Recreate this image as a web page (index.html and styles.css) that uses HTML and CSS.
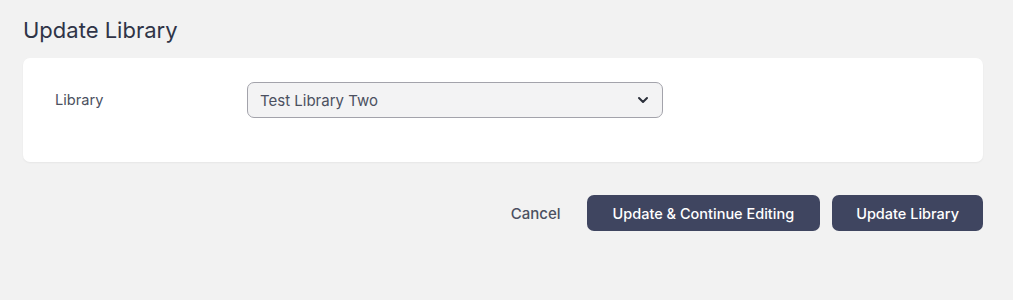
FILE: index.html
```html
<!DOCTYPE html>
<html>
<head>
<meta charset="utf-8">
<link rel="stylesheet" href="styles.css">
</head>
<body>
<div class="page">
  <h1 class="title">Update Library</h1>
  <div class="card">
    <div class="row">
      <label class="label">Library</label>
      <div class="select">
        <span class="select-text">Test Library Two</span>
        <svg class="chev" width="12" height="8" viewBox="0 0 12 8"><path d="M2 2 L6 6 L10 2" fill="none" stroke="#2b2f3a" stroke-width="2" stroke-linecap="round" stroke-linejoin="round"/></svg>
      </div>
    </div>
  </div>
  <div class="actions">
    <a class="cancel">Cancel</a>
    <button class="btn btn-wide">Update &amp; Continue Editing</button>
    <button class="btn">Update Library</button>
  </div>
</div>
</body>
</html>
```
FILE: styles.css
```css
* { box-sizing: border-box; }
html, body { margin: 0; padding: 0; background: #f2f2f2; }
body { font-family: Inter, Roboto, "Noto Sans", sans-serif; color: #2f3447; }
.page { padding: 16px 30px 0 23px; }
.title { margin: 0 0 14px; font-size: 22px; font-weight: 400; line-height: 28px; color: #2f3447; }
.card { background: #fff; border-radius: 7px; padding: 24px 32px 44px; box-shadow: 0 1px 2px rgba(0,0,0,0.05); }
.row { display: flex; align-items: center; }
.label { width: 192px; font-size: 14.6px; color: #4b5060; }
.select { width: 416px; height: 36px; border: 1px solid #a3a3ab; border-radius: 7px; background: #f3f3f4; display: flex; align-items: center; justify-content: space-between; padding: 0 13px 0 12px; }
.select-text { font-size: 15px; color: #4b5060; }
.chev { display: block; }
.actions { display: flex; justify-content: flex-end; align-items: center; margin-top: 33px; gap: 12px; }
.cancel { font-size: 15px; font-weight: 500; color: #4b5060; margin-right: 14px; }
.btn { height: 36px; border: none; border-radius: 7px; background: #3f4560; color: #fff; font-family: Inter, Roboto, "Noto Sans", sans-serif; font-size: 14.5px; font-weight: 500; padding: 0 24px; }
.btn-wide { padding: 0 26px; }
```
